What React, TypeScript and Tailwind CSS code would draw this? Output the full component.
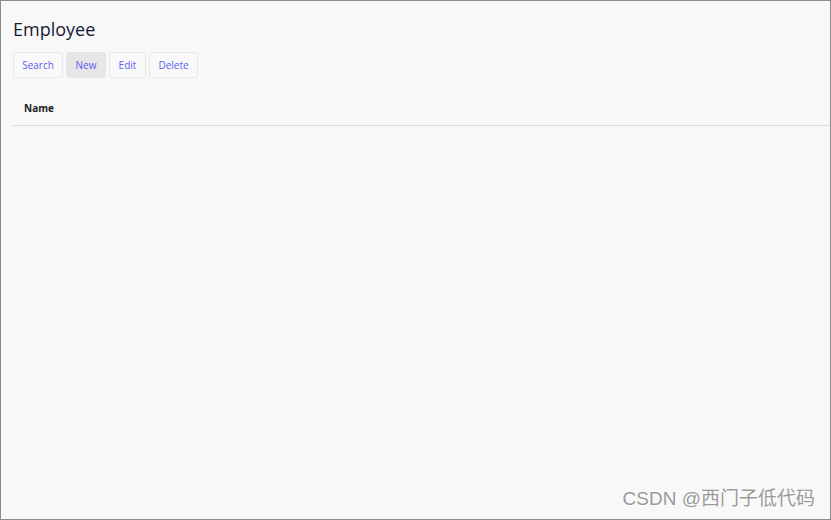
import React from "react";

const actions = [
  { label: "Search", w: "w-[50px]" },
  { label: "New", w: "w-[40px]" },
  { label: "Edit", w: "w-[37px]" },
  { label: "Delete", w: "w-[49px]" },
];

const App: React.FC = () => {
  return (
    <div
      className="relative w-[831px] h-[520px] bg-[#f8f8f8] border border-[#8c8c8c] overflow-hidden"
      style={{ fontFamily: '"Open Sans", "Noto Sans", sans-serif' }}
    >
      <div className="pl-[11px] pt-[14px]">
        <h1 className="text-[18px] leading-[28px] font-medium text-[#161b33] ml-[1px]">Employee</h1>
        {/* toolbar */}
        <div className="flex gap-[3px] mt-[9px] ml-[1px]">
          {actions.map((a) => (
            <button
              key={a.label}
              type="button"
              className={`${a.w} h-[26px] rounded-[3px] border text-[10px] text-[#5b5ef0] ${
                a.label === "New"
                  ? "bg-[#e6e6e8] border-[#e6e6e8]"
                  : "bg-[#f9f9f9] border-[#e8e8e8]"
              }`}
            >
              {a.label}
            </button>
          ))}
        </div>
        {/* table header */}
        <div className="h-[48px] flex items-end pb-[10px] pl-[12px] border-b border-[#dcdcdc]">
          <span className="text-[10px] leading-[14px] font-bold text-[#1a1a1a]">Name</span>
        </div>
      </div>
      <div
        className="absolute right-[15px] bottom-[6px] text-[19px] text-[#9a9a9a]"
        style={{
          fontFamily: '"Liberation Sans", "Noto Sans CJK SC", sans-serif',
          textShadow: "1px 1px 0 #fff",
        }}
      >
        CSDN @西门子低代码
      </div>
    </div>
  );
};

export default App;
